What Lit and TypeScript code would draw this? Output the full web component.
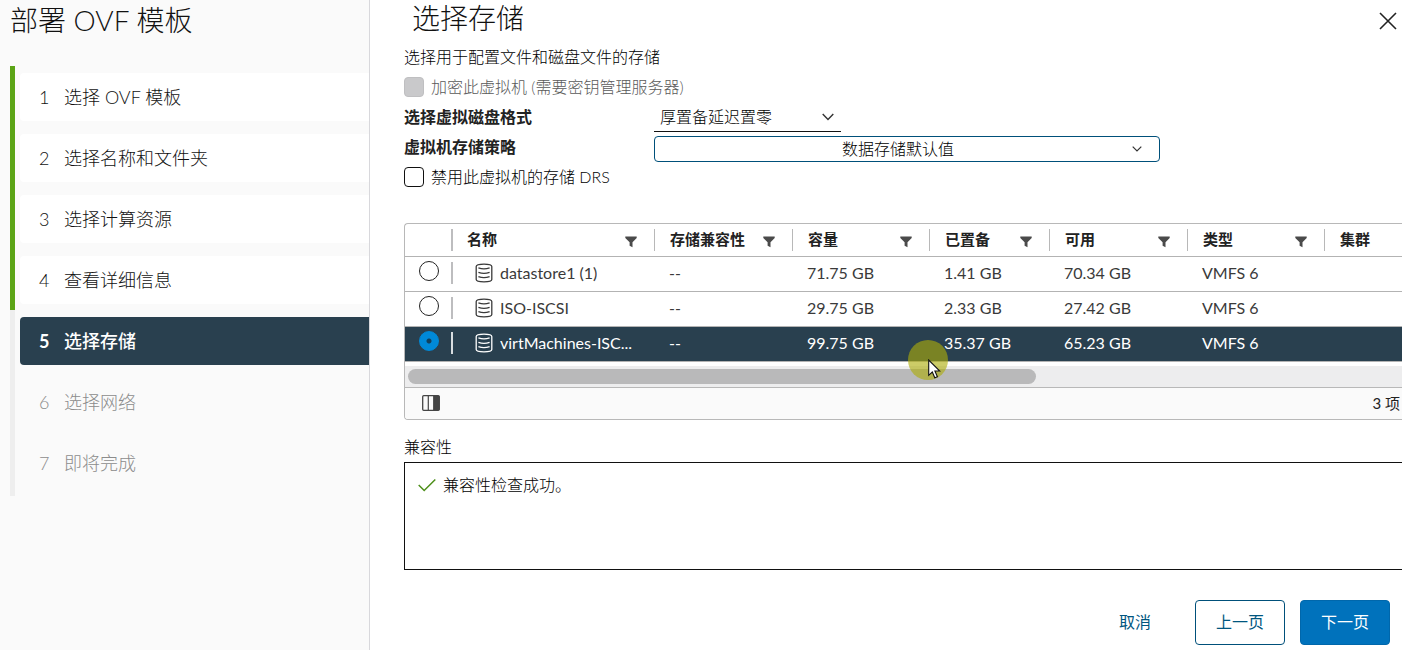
import { LitElement, html, css, svg } from "lit";
import { customElement, state } from "lit/decorators.js";
import { classMap } from "lit/directives/class-map.js";

const steps = [
  "选择 OVF 模板",
  "选择名称和文件夹",
  "选择计算资源",
  "查看详细信息",
  "选择存储",
  "选择网络",
  "即将完成",
];
const currentStep = 4;

const columns = ["名称", "存储兼容性", "容量", "已置备", "可用", "类型", "集群"];

const datastores = [
  { name: "datastore1 (1)", compat: "--", capacity: "71.75 GB", provisioned: "1.41 GB", free: "70.34 GB", type: "VMFS 6" },
  { name: "ISO-ISCSI", compat: "--", capacity: "29.75 GB", provisioned: "2.33 GB", free: "27.42 GB", type: "VMFS 6" },
  { name: "virtMachines-ISC...", compat: "--", capacity: "99.75 GB", provisioned: "35.37 GB", free: "65.23 GB", type: "VMFS 6" },
];

const filterIcon = html`<svg width="12" height="12" viewBox="0 0 12 12" aria-hidden="true">
  ${svg`<path d="M0.3 0.5H11.7V2L7.5 6.3V11.3L4.6 9.8V6.3L0.3 2Z" fill="#4a4a4a"/>`}
</svg>`;

const storageIcon = html`<svg width="18" height="20" viewBox="0 0 18 20" fill="none" stroke="currentColor" stroke-width="1.3" aria-hidden="true">
  ${svg`<path d="M1.2 3.4C1.2 2.1 4.5 1.1 9 1.1S16.8 2.1 16.8 3.4V16.6C16.8 17.9 13.5 18.9 9 18.9S1.2 17.9 1.2 16.6Z"/>
  <path d="M3.4 4.9C6.5 6 11.5 6 14.6 4.9M3.4 9.3C6.5 10.4 11.5 10.4 14.6 9.3M3.4 13.7C6.5 14.8 11.5 14.8 14.6 13.7"/>`}
</svg>`;

@customElement("app-root")
export class AppRoot extends LitElement {
  @state() private selected = 2;

  static styles = css`
    :host {
      display: block;
      position: relative;
      overflow: hidden;
      font-family: Lato, "Noto Sans CJK SC", sans-serif;
      font-size: 16px;
      font-weight: 400;
      color: #222;
      background: #fff;
    }
    * { box-sizing: border-box; }
    h1, h2, ol, p { margin: 0; padding: 0; }
    .wizard { display: flex; min-height: 100vh; }
    .side {
      flex: none;
      width: 370px;
      padding-left: 10px;
      background: #fafafa;
      border-right: 1px solid #d8d8dc;
    }
    .title {
      height: 66px;
      font-size: 28px;
      line-height: 40px;
      font-weight: 300;
      color: #111;
    }
    .steps { list-style: none; }
    .step { border-left: 5px solid #eee; padding: 7px 0 6px 5px; }
    .step.done { border-left-color: #5ba416; }
    .step:last-child { padding-bottom: 9px; }
    .step-link {
      display: flex;
      align-items: center;
      height: 48px;
      padding-left: 19px;
      gap: 14px;
      border-radius: 4px 0 0 4px;
      font-size: 18px;
      line-height: 24px;
      font-weight: 300;
      color: #111;
      text-decoration: none;
    }
    .done .step-link { background: #fff; }
    .current .step-link { background: #29404f; color: #fff; font-weight: 500; }
    .todo .step-link { color: #8c8c8c; }
    .num { width: 11px; }
    .current .num { font-weight: 700; }
    .main { flex: 1; min-width: 0; padding-left: 34px; }
    .head {
      display: flex;
      justify-content: space-between;
      height: 42px;
      padding: 0 0 0 8px;
    }
    .page-title { font-size: 28px; line-height: 36px; font-weight: 300; color: #111; }
    .close { align-self: center; display: flex; padding: 5px; border: 0; background: none; }
    .line { display: flex; align-items: center; height: 30px; line-height: 24px; }
    .light { font-weight: 300; color: #000; }
    .field-label { width: 250px; font-weight: 600; }
    .check-line { gap: 7px; font-weight: 300; color: #000; }
    .check {
      appearance: none;
      width: 20px;
      height: 20px;
      margin: 0;
      border: 1px solid #111;
      border-radius: 4px;
      background: #fff;
    }
    .check:disabled { background: #c9c9cb; border-color: #bfbfc1; }
    .disabled { color: #5a5a5a; }
    .pick { position: relative; align-self: end; display: flex; align-items: center; }
    .pick svg { position: absolute; right: 7px; pointer-events: none; }
    .pick.wide { flex: 0 1 506px; }
    .pick.wide svg { right: 18px; }
    .select {
      appearance: none;
      font: inherit;
      font-weight: 300;
      color: #000;
      width: 187px;
      height: 30px;
      padding: 0 24px 0 6px;
      border: 0;
      border-bottom: 1px solid #111;
      border-radius: 0;
      background: #fff;
    }
    .wide .select {
      width: 100%;
      height: 26px;
      padding: 0 24px 0 6px;
      border: 1px solid #00507a;
      border-radius: 4px;
      text-align-last: center;
    }
    .grid {
      margin-top: 31px;
      border: 1px solid #b8b8b8;
      border-right: 0;
      border-radius: 4px 0 0 4px;
      overflow: hidden;
    }
    .table { width: 100%; table-layout: fixed; border-collapse: separate; border-spacing: 0; }
    .c0 { width: 48px; }
    .c1 { width: 201px; }
    .c2, .c5 { width: 138px; }
    .c3, .c6 { width: 137px; }
    .c4 { width: 120px; }
    .table th, .table td {
      height: 35px;
      padding: 0 0 2px;
      text-align: left;
      border-bottom: 1px solid #b3b3b3;
      white-space: nowrap;
    }
    .table th { height: 33px; padding: 0; }
    .th {
      display: flex;
      align-items: center;
      justify-content: space-between;
      height: 22px;
      padding: 0 17px 0 15px;
      border-left: 1px solid #b8b8b8;
      font-size: 15px;
      font-weight: 600;
      line-height: 20px;
    }
    .th span { padding-bottom: 2px; }
    .th svg { margin-top: 4px; }
    .th.first { border-left: 0; padding-left: 14px; }
    .bar {
      display: flex;
      align-items: center;
      height: 22px;
      padding-left: 14px;
      border-right: 2px solid #bdbdbf;
    }
    .td { padding-left: 15px; line-height: 20px; color: #3a3a3a; }
    .name {
      display: flex;
      align-items: center;
      gap: 7px;
      padding: 0 12px 0 22px;
      line-height: 20px;
      color: #3a3a3a;
    }
    .name svg { flex: none; }
    .name-text { overflow: hidden; text-overflow: ellipsis; }
    .radio {
      appearance: none;
      width: 20px;
      height: 20px;
      margin: 0 0 5px;
      border: 1px solid #222;
      border-radius: 50%;
      background: #fff;
    }
    .radio:checked {
      border-color: #0089d8;
      background: radial-gradient(circle, #12405c 0 2px, #0089d8 3px);
    }
    .picked td { background: #29404f; }
    .picked .td, .picked .name { color: #fff; }
    .picked .bar { border-color: #d8dde0; }
    .track { margin-top: 4px; height: 22px; padding: 3px; background: #ededee; border-bottom: 1px solid #b8b8b8; }
    .thumb { width: 63.4%; height: 15px; border-radius: 8px; background: #b9b9ba; }
    .foot {
      display: flex;
      align-items: center;
      justify-content: space-between;
      height: 31px;
      padding: 0 2px 2px 17px;
      background: #fafafa;
      font-size: 15px;
    }
    .cols { display: flex; padding: 0; border: 0; background: none; }
    .compat-title { margin-top: 12px; }
    .compat {
      height: 108px;
      padding: 8px 13px;
      border: 1px solid #111;
      border-right: 0;
    }
    .ok { display: flex; align-items: center; gap: 7px; line-height: 28px; font-weight: 300; color: #000; }
    .actions { display: flex; justify-content: flex-end; gap: 15px; padding: 30px 12px 5px; }
    .btn {
      width: 90px;
      height: 45px;
      padding: 0 0 3px;
      border: 1px solid #00507a;
      border-radius: 4px;
      background: #fff;
      font: inherit;
      color: #00567f;
    }
    .btn.ghost { border-color: transparent; }
    .btn.primary { background: #0072bc; border-color: #0067ab; color: #fff; }
    .halo {
      position: absolute;
      left: 908px;
      top: 340px;
      width: 40px;
      height: 40px;
      border-radius: 50%;
      background: rgba(172, 172, 10, 0.62);
      pointer-events: none;
    }
    .pointer { position: absolute; left: 928px; top: 359px; pointer-events: none; }
  `;

  render() {
    return html`
      <div class="wizard">
        <nav class="side">
          <h1 class="title">部署 OVF 模板</h1>
          <ol class="steps">
            ${steps.map(
              (label, i) => html`<li class=${classMap({ step: true, done: i < currentStep, current: i === currentStep, todo: i > currentStep })}>
                <a class="step-link" href="#"><span class="num">${i + 1}</span><span>${label}</span></a>
              </li>`
            )}
          </ol>
        </nav>
        <main class="main">
          <header class="head">
            <h2 class="page-title">选择存储</h2>
            <button class="close" aria-label="关闭">
              <svg width="18" height="18" viewBox="0 0 18 18" stroke="#222" stroke-width="1.6" fill="none"><path d="M1 1L17 17M17 1L1 17" /></svg>
            </button>
          </header>
          <p class="line light">选择用于配置文件和磁盘文件的存储</p>
          <div class="line check-line disabled">
            <input class="check" type="checkbox" id="encrypt" disabled />
            <label for="encrypt">加密此虚拟机 (需要密钥管理服务器)</label>
          </div>
          <div class="line">
            <label class="field-label" for="format">选择虚拟磁盘格式</label>
            <span class="pick">
              <select class="select" id="format"><option>厚置备延迟置零</option></select>
              <svg width="12" height="8" viewBox="0 0 12 8" fill="none" stroke="#333" stroke-width="1.4"><path d="M0.7 1L6 6.5L11.3 1" /></svg>
            </span>
          </div>
          <div class="line">
            <label class="field-label" for="policy">虚拟机存储策略</label>
            <span class="pick wide">
              <select class="select" id="policy"><option>数据存储默认值</option></select>
              <svg width="10" height="6" viewBox="0 0 10 6" fill="none" stroke="#333" stroke-width="1.2"><path d="M0.7 0.6L5 4.9L9.3 0.6" /></svg>
            </span>
          </div>
          <div class="line check-line">
            <input class="check" type="checkbox" id="drs" />
            <label for="drs">禁用此虚拟机的存储 DRS</label>
          </div>

          <section class="grid">
            <table class="table">
              <colgroup>
                <col class="c0" /><col class="c1" /><col class="c2" /><col class="c3" />
                <col class="c4" /><col class="c5" /><col class="c6" /><col />
              </colgroup>
              <thead>
                <tr>
                  <th><div class="bar"></div></th>
                  ${columns.map(
                    (c, i) => html`<th scope="col">
                      <div class=${classMap({ th: true, first: i === 0 })}><span>${c}</span>${i < 6 ? filterIcon : ""}</div>
                    </th>`
                  )}
                </tr>
              </thead>
              <tbody>
                ${datastores.map(
                  (d, i) => html`<tr class=${classMap({ picked: i === this.selected })}>
                    <td>
                      <div class="bar">
                        <input class="radio" type="radio" name="datastore" aria-label=${d.name}
                          .checked=${i === this.selected} @change=${() => (this.selected = i)} />
                      </div>
                    </td>
                    <td><div class="name">${storageIcon}<span class="name-text">${d.name}</span></div></td>
                    ${[d.compat, d.capacity, d.provisioned, d.free, d.type, ""].map((v) => html`<td><div class="td">${v}</div></td>`)}
                  </tr>`
                )}
              </tbody>
            </table>
            <div class="track"><div class="thumb"></div></div>
            <div class="foot">
              <button class="cols" aria-label="管理列">
                <svg width="18" height="16" viewBox="0 0 18 16"><rect x="0.7" y="0.7" width="16.6" height="14.6" rx="1" fill="none" stroke="#444" stroke-width="1.3" /><path d="M6.3 1V15" stroke="#444" stroke-width="1.2" /><rect x="12" y="1" width="5.5" height="14" fill="#444" /><path d="M11.6 1V15" stroke="#444" stroke-width="1" /></svg>
              </button>
              <span>3 项</span>
            </div>
          </section>

          <div class="line light compat-title">兼容性</div>
          <section class="compat">
            <div class="ok">
              <svg width="18" height="14" viewBox="0 0 18 14" fill="none" stroke="#4d8f1a" stroke-width="1.5"><path d="M0.7 7L6.2 12.5L17.3 1.5" /></svg>
              <span>兼容性检查成功。</span>
            </div>
          </section>
          <footer class="actions">
            <button class="btn ghost">取消</button>
            <button class="btn">上一页</button>
            <button class="btn primary">下一页</button>
          </footer>
        </main>
      </div>
      <div class="halo"></div>
      <svg class="pointer" width="13" height="20" viewBox="0 0 13 20"><path d="M0.7 1V16.3L4.3 13L6.8 18.8L9.4 17.7L6.9 12H11.8Z" fill="#fff" stroke="#111" stroke-width="1.1" /></svg>
    `;
  }
}
